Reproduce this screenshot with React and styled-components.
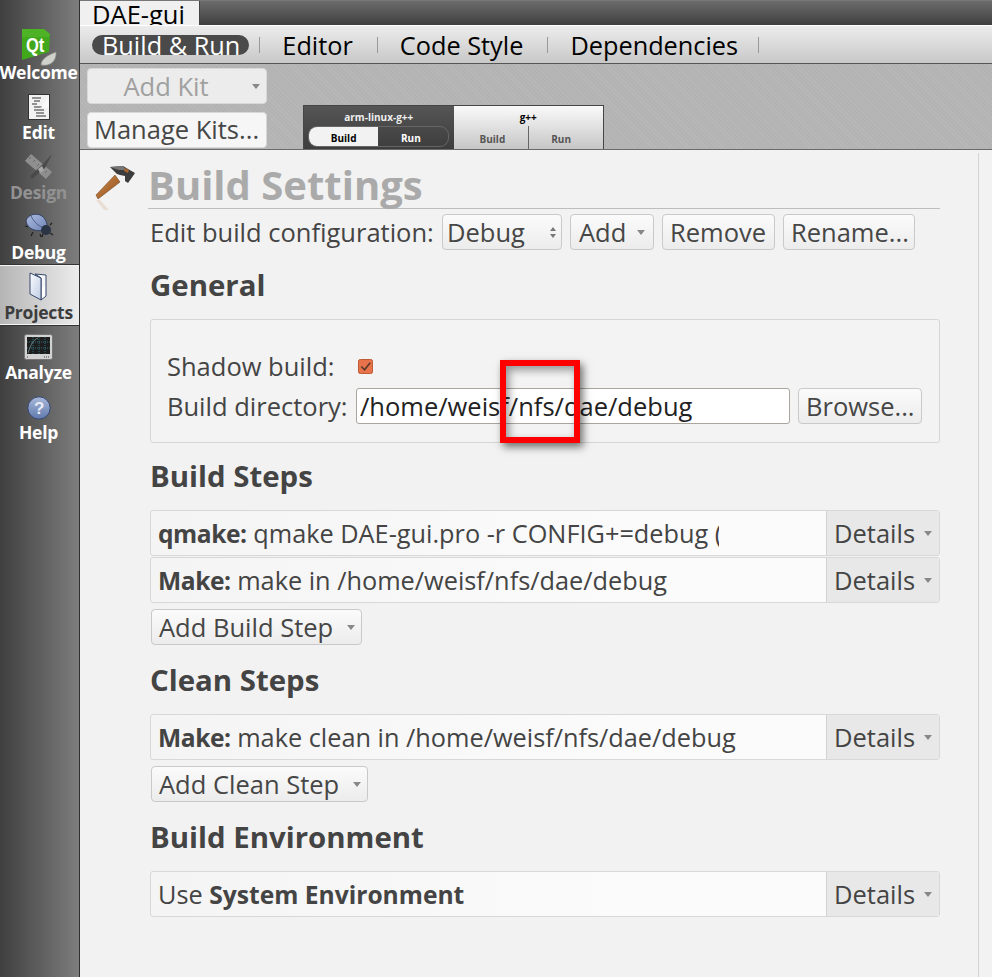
import React from 'react'
import styled, { createGlobalStyle } from 'styled-components'

const Global = createGlobalStyle`
  html, body { margin: 0; padding: 0; background: #f2f2f2; }
  body { font-family: "Open Sans", "Noto Sans", "Liberation Sans", sans-serif; }
  * { box-sizing: border-box; }
`
const Shell = styled.div`
  position: relative;
  display: flex;
  width: 992px;
  height: 977px;
  overflow: hidden;
`
const Sidebar = styled.div`
  width: 80px;
  flex: none;
  padding-top: 25px;
  border-right: 1px solid #2e2e2e;
  background: linear-gradient(to right, #3f3f3f, #7d7d7d);
`
const NavItem = styled.div`
  height: 60px;
  display: flex;
  flex-direction: column;
  align-items: center;
  justify-content: flex-end;
  padding: 0 2px ${p => (p.active ? 1 : 2)}px 0;
  font-size: 17.5px;
  line-height: 22px;
  font-weight: 700;
  letter-spacing: -0.25px;
  white-space: nowrap;
  color: ${p => (p.active ? '#3d3d3d' : p.dim ? '#929292' : '#fff')};
  ${p =>
    p.active &&
    `background: linear-gradient(to right, #b5b5b5, #ececec);
     border-top: 1px solid #f4f4f4;
     border-bottom: 1px solid #f4f4f4;
     box-shadow: 0 -1px 0 #333, 0 1px 0 #333;`}
`
const NavIcon = styled.svg`
  display: block;
  flex: none;
  margin-bottom: 1px;
  overflow: visible;
`
const Main = styled.div`
  flex: 1;
  min-width: 0;
  display: flex;
  flex-direction: column;
`
const TitleBar = styled.div`
  height: 25px;
  display: flex;
  align-items: flex-end;
  border-top: 1px solid #777;
  background: linear-gradient(#6b6b6b, #585858 45%, #3f3f3f);
`
const DocTab = styled.div`
  width: 120px;
  height: 24px;
  padding-left: 12px;
  font-size: 25.5px;
  line-height: 27px;
  color: #000;
  background: #f0f0f0;
  border-right: 1px solid #444;
`
const TabBar = styled.div`
  height: 39px;
  display: flex;
  align-items: center;
  padding-left: 12px;
  border-top: 1px solid #fff;
  border-bottom: 1px solid #555;
  background: linear-gradient(#ececec, #c8c8c8);
`
const ModeTab = styled.div`
  height: 20px;
  margin-right: ${p => p.after}px;
  padding: ${p => (p.active ? '0 9px 0 10px' : '0')};
  display: flex;
  align-items: center;
  border-radius: 10px;
  font-size: 25.3px;
  white-space: nowrap;
  color: ${p => (p.active ? '#fff' : '#000')};
  background: ${p => (p.active ? '#4a4a4a' : 'transparent')};
`
const Sep = styled.div`
  width: 1px;
  height: 16px;
  margin-right: 22px;
  background: #999;
`
const KitBar = styled.div`
  height: 86px;
  display: flex;
  align-items: flex-end;
  border-bottom: 1px solid #6a6a6a;
  background: repeating-linear-gradient(45deg, #b8b8b8 0 1px, #b3b3b3 1px 3px);
`
const KitButtons = styled.div`
  width: 223px;
  flex: none;
  padding: 4px 0 1px 7px;
  display: flex;
  flex-direction: column;
  gap: 8px;
`
const KitButton = styled.div`
  width: 180px;
  height: 36px;
  display: flex;
  align-items: center;
  justify-content: ${p => (p.disabled ? 'center' : 'flex-start')};
  padding: ${p => (p.disabled ? '0 22px 0 0' : '0 0 2px 6px')};
  position: relative;
  font-size: 25.5px;
  white-space: nowrap;
  color: ${p => (p.disabled ? '#a0a0a0' : '#464646')};
  border-radius: 4px;
  border: 1px solid #d8d8d8;
  background: ${p => (p.disabled ? '#ececec' : '#f6f6f6')};
`
const Caret = styled.span`
  position: ${p => (p.abs ? 'absolute' : 'static')};
  right: 6px;
  top: 15px;
  flex: none;
  width: 0;
  height: 0;
  border-left: 4px solid transparent;
  border-right: 4px solid transparent;
  border-top: 5px solid #888;
`
const Spinner = styled.svg`
  flex: none;
`
const KitSelector = styled.div`
  display: flex;
  width: 301px;
  height: 44px;
  border: 1px solid #454545;
  border-bottom: none;
`
const KitColumn = styled.div`
  width: 150px;
  display: flex;
  flex-direction: column;
  background: ${p => (p.dark ? 'linear-gradient(#555, #3d3d3d)' : 'linear-gradient(#fafafa, #c6c6c6)')};
`
const KitName = styled.div`
  height: 20px;
  padding-top: 4px;
  text-align: center;
  font-size: 10px;
  font-weight: 700;
  color: ${p => (p.dark ? '#eee' : '#000')};
`
const Segments = styled.div`
  flex: 1;
  display: flex;
  font-size: 10px;
  font-weight: 700;
  ${p => p.dark && `
    margin: 0 5px 2px 4px;
    border: 1px solid #666;
    border-radius: 9px;
    overflow: hidden;
  `}
`
const Segment = styled.div`
  width: 50%;
  flex: none;
  display: flex;
  align-items: center;
  justify-content: center;
  padding: 2px ${p => p.right || 0}px 0 ${p => p.left || 0}px;
  color: ${p => (p.selected ? '#000' : p.dark ? '#fff' : '#555')};
  background: ${p => (p.selected ? '#f2f2f2' : 'transparent')};
  border-left: ${p => (p.divide ? '1px solid #666' : 'none')};
`
const Content = styled.div`
  flex: 1;
  position: relative;
  padding: 0 52px 0 70px;
  color: #444;
  background: #f2f2f2;
  &::after {
    content: '';
    position: absolute;
    left: 898px;
    top: 3px;
    bottom: 0;
    width: 1px;
    background: #d4d4d4;
  }
`
const Hammer = styled.svg`
  position: absolute;
  left: 15px;
  top: 12px;
`
const PageTitle = styled.div`
  height: 59px;
  margin-left: -2px;
  padding-top: 12px;
  border-bottom: 1px solid #bdbdbd;
  font-size: 40px;
  line-height: 46px;
  font-weight: 700;
  white-space: nowrap;
  color: #aaa;
`
const Row = styled.div`
  display: flex;
  align-items: center;
  gap: 8px;
  margin-top: ${p => p.top || 0}px;
  font-size: 25.5px;
`
const ConfigRow = styled(Row)`
  height: 36px;
  margin-top: 5px;
`
const Push = styled.button`
  height: 36px;
  width: ${p => p.w}px;
  flex: none;
  display: flex;
  align-items: center;
  justify-content: space-between;
  padding: 0 ${p => p.pad || 7}px;
  font: inherit;
  font-size: 25.5px;
  color: #464646;
  border: 1px solid #c9c9c9;
  border-radius: 4px;
  background: linear-gradient(#fbfbfb, #ececec);
  white-space: nowrap;
`
const Section = styled.h2`
  margin: 0;
  height: ${p => p.h}px;
  padding-top: ${p => p.top}px;
  font-size: 29.4px;
  line-height: 36px;
  font-weight: 700;
  white-space: nowrap;
  color: #444;
`
const Panel = styled.div`
  height: 124px;
  padding: 29px 16px 0;
  border: 1px solid #d6d6d6;
  border-radius: 3px;
  background: #f3f3f3;
`
const FieldLabel = styled.span`
  flex: none;
  width: ${p => p.w}px;
  white-space: nowrap;
`
const Check = styled.svg`
  flex: none;
`
const PathField = styled.div`
  width: 434px;
  height: 36px;
  flex: none;
  padding-left: 3px;
  line-height: 35px;
  font-size: 25.5px;
  color: #222;
  background: #fff;
  border: 1px solid #aaa69f;
  border-radius: 3px;
  white-space: nowrap;
`
const StepRow = styled.div`
  display: flex;
  height: 46px;
  margin-bottom: 1px;
  border: 1px solid #d8d8d8;
  border-radius: 3px;
  font-size: 25.3px;
  color: #444;
  background: linear-gradient(to right, #f4f4f4, #fbfbfb 60%);
`
const StepText = styled.div`
  flex: 1;
  min-width: 0;
  padding-left: 7px;
  line-height: 44px;
  white-space: nowrap;
  b { font-weight: 700; font-size: 24.6px; }
`
const Lead = styled.b`
  letter-spacing: -0.45px;
`
const Clip = styled.div`
  width: 561px;
  overflow: hidden;
`
const Details = styled.div`
  width: 113px;
  flex: none;
  display: flex;
  align-items: center;
  justify-content: space-between;
  padding: 0 7px 0 7px;
  font-size: 25.5px;
  color: #444;
  background: #e8e8e8;
  border-left: 1px solid #d2d2d2;
`
const AddStep = styled(Push)`
  margin: 6px 0 0 1px;
  padding: 0 6px 0 7px;
`
const Marker = styled.div`
  position: absolute;
  left: 500px;
  top: 360px;
  width: 80px;
  height: 83px;
  border: 6px solid #ff0000;
  box-shadow: 3px 4px 8px rgba(0, 0, 0, 0.55), inset 3px 4px 8px rgba(0, 0, 0, 0.4);
`

const Icon = ({ name }) => {
  if (name === 'qt')
    return (
      <NavIcon width="36" height="38" viewBox="0 0 36 38">
        <path d="M1 7 L23 7 L29 12 L28 30 L1 38 Z" fill="#41a81b" />
        <path d="M1 7 L23 7 L29 12 L28 15 L1 15 Z" fill="#5cbc34" opacity=".5" />
        <text x="5" y="30" fontSize="21" fontWeight="700" fill="#fff" fontFamily="Liberation Sans" textLength="18" lengthAdjust="spacingAndGlyphs">Qt</text>
        <path d="M20 43 C20 37 27 33 35 30 C36 38 30 45 20 43 Z" fill="#cfd2ca" stroke="#8a8a8a" strokeWidth=".7" />
      </NavIcon>
    )
  if (name === 'edit')
    return (
      <NavIcon width="22" height="26" viewBox="0 0 22 26">
        <rect x=".5" y=".5" width="21" height="25" fill="#f2f2f2" stroke="#333" />
        <path d="M4 4h9M6 7h6M4 10h5M6 13h8M6 16h10M8 19h8M8 22h10" stroke="#333" strokeWidth="1" />
        <path d="M12 14 L21 2 V14 Z" fill="#fff" opacity=".5" />
      </NavIcon>
    )
  if (name === 'design')
    return (
      <NavIcon width="28" height="28" viewBox="0 0 28 28">
        <path d="M0 9 L6 2 L27 20 L21 27 Z" fill="#8f8f8f" />
        <path d="M6 5l-2 2M10 8l-2 2M14 12l-2 2M18 15l-2 2M22 19l-2 2" stroke="#6c6c6c" />
        <path d="M7 27 L5 24 L18 12 L27 2 L20 16 Z" fill="#4a4a4a" />
        <path d="M13 17 L17 14 L19 18 L15 21 Z" fill="#a8a8a8" />
      </NavIcon>
    )
  if (name === 'bug')
    return (
      <NavIcon width="30" height="26" viewBox="0 0 30 26">
        <defs>
          <linearGradient id="shellFill" x1="0" y1="0" x2="1" y2="1">
            <stop offset="0" stopColor="#aebce0" />
            <stop offset="1" stopColor="#6d84b5" />
          </linearGradient>
        </defs>
        <path d="M2 7 C3 1 12 -2 18 2 C23 6 24 12 22 15 C15 19 3 16 2 7 Z" fill="url(#shellFill)" stroke="#33415e" />
        <path d="M7 2 C10 8 15 13 21 14" stroke="#4b5d85" fill="none" />
        <circle cx="22" cy="16" r="5" fill="#2b3445" />
        <path d="M1 12l3 1M9 18l-2 4M16 20l1 3M26 11l2-2M26 19l3 2M19 20l-1 3" stroke="#222" strokeWidth="1.3" />
      </NavIcon>
    )
  if (name === 'folder')
    return (
      <NavIcon width="20" height="30" viewBox="0 0 20 30">
        <defs>
          <linearGradient id="coverFill" x1="0" y1="0" x2="1" y2="1">
            <stop offset="0" stopColor="#fdfdff" />
            <stop offset="1" stopColor="#bccbe4" />
          </linearGradient>
        </defs>
        <path d="M6 4 L17 5 L17 26 L12 30 V8 Z" fill="#f4f6fa" stroke="#37476b" />
        <path d="M1 3 L12 8 V30 L1 24 Z" fill="url(#coverFill)" stroke="#37476b" />
        <path d="M13 18 L16 16 V26 L13 28 Z" fill="#fff" />
      </NavIcon>
    )
  if (name === 'analyze')
    return (
      <NavIcon width="30" height="26" viewBox="0 0 30 26">
        <rect x=".5" y=".5" width="28" height="25" rx="2" fill="#d2d2d2" stroke="#777" />
        <rect x="3" y="3" width="23" height="17" fill="#1d1d1d" />
        <path d="M9 3v17M15 3v17M21 3v17M3 8h23M3 14h23" stroke="#3a95a5" strokeWidth=".7" strokeDasharray="1 1" />
        <path d="M4 19 C7 10 9 6 14 4" stroke="#5f7f80" fill="none" />
        <path d="M20 23h6M3 23h1" stroke="#444" strokeWidth="1.2" strokeDasharray="1 1" />
      </NavIcon>
    )
  return (
    <NavIcon width="24" height="24" viewBox="0 0 24 24">
      <defs>
        <linearGradient id="helpFill" x1="0" y1="0" x2="0" y2="1">
          <stop offset="0" stopColor="#a9b9da" />
          <stop offset="1" stopColor="#6079ad" />
        </linearGradient>
      </defs>
      <circle cx="12" cy="12" r="11.2" fill="url(#helpFill)" stroke="#34466f" />
      <text x="12" y="18" textAnchor="middle" fontSize="17" fill="#e9edf5" fontFamily="Liberation Sans">?</text>
    </NavIcon>
  )
}

const navItems = [
  { name: 'qt', label: 'Welcome' },
  { name: 'edit', label: 'Edit' },
  { name: 'design', label: 'Design', dim: true },
  { name: 'bug', label: 'Debug' },
  { name: 'folder', label: 'Projects', active: true },
  { name: 'analyze', label: 'Analyze' },
  { name: 'help', label: 'Help' }
]

const Step = ({ children, clip }) => (
  <StepRow>
    <StepText>{clip ? <Clip>{children}</Clip> : children}</StepText>
    <Details>
      Details <Caret />
    </Details>
  </StepRow>
)

export default function App() {
  return (
    <Shell>
      <Global />
      <Sidebar>
        {navItems.map(item => (
          <NavItem key={item.label} active={item.active} dim={item.dim}>
            <Icon name={item.name} />
            {item.label}
          </NavItem>
        ))}
      </Sidebar>
      <Main>
        <TitleBar>
          <DocTab>DAE-gui</DocTab>
        </TitleBar>
        <TabBar>
          <ModeTab active after={10}>Build &amp; Run</ModeTab>
          <Sep />
          <ModeTab after={24}>Editor</ModeTab>
          <Sep />
          <ModeTab after={24}>Code Style</ModeTab>
          <Sep />
          <ModeTab after={20}>Dependencies</ModeTab>
          <Sep />
        </TabBar>
        <KitBar>
          <KitButtons>
            <KitButton disabled>
              Add Kit
              <Caret abs />
            </KitButton>
            <KitButton>Manage Kits...</KitButton>
          </KitButtons>
          <KitSelector>
            <KitColumn dark>
              <KitName dark>arm-linux-g++</KitName>
              <Segments dark>
                <Segment selected>Build</Segment>
                <Segment dark right={4}>Run</Segment>
              </Segments>
            </KitColumn>
            <KitColumn>
              <KitName>g++</KitName>
              <Segments>
                <Segment left={3}>Build</Segment>
                <Segment divide right={10}>Run</Segment>
              </Segments>
            </KitColumn>
          </KitSelector>
        </KitBar>
        <Content>
          <Hammer width="42" height="50" viewBox="0 0 42 50">
            <defs>
              <linearGradient id="woodFill" x1="0" y1="0" x2="1" y2="1">
                <stop offset="0" stopColor="#d08a4a" />
                <stop offset="1" stopColor="#8f4f1f" />
              </linearGradient>
            </defs>
            <path d="M1 33 L20 13 L25 20 L3 37 Z" fill="url(#woodFill)" stroke="#6b3a10" strokeWidth=".5" />
            <path d="M15 5 L28 4 L33 7 L40 11 L38 14 L33 21 L30 19 L30 14 L25 13 L22 12 Z" fill="#3c3c3c" />
            <path d="M15 5 L28 4 L31 8 L24 8 Z" fill="#777" />
            <path d="M30 6 L34 8 L33 11 L29 9 Z" fill="#a8642a" />
            <path d="M1 38 L5 38 L14 48 L9 48 Z" fill="#e6d6c8" opacity=".7" />
          </Hammer>
          <PageTitle>Build Settings</PageTitle>
          <ConfigRow>
            <FieldLabel w={284}>Edit build configuration:</FieldLabel>
            <Push w={120} pad={4}>
              Debug
              <Spinner width="8" height="13" viewBox="0 0 8 13">
                <path d="M4 1 L7 5 H1 Z M4 12 L1 8 H7 Z" fill="#777" />
              </Spinner>
            </Push>
            <Push w={84} pad={8}>
              Add <Caret />
            </Push>
            <Push w={113}>Remove</Push>
            <Push w={132}>Rename...</Push>
          </ConfigRow>
          <Section h={69} top={17}>General</Section>
          <Panel>
            <Row>
              <FieldLabel w={183}>Shadow build:</FieldLabel>
              <Check width="15" height="15" viewBox="0 0 16 16">
                <rect x=".5" y=".5" width="15" height="15" rx="2" fill="#e8734a" stroke="#b9532e" />
                <path d="M3.5 8 L7 11.5 L13 4" stroke="#5a3a2c" strokeWidth="1.8" fill="none" />
              </Check>
            </Row>
            <Row top={5}>
              <FieldLabel w={181}>Build directory:</FieldLabel>
              <PathField>/home/weisf/nfs/dae/debug</PathField>
              <Push w={124}>Browse...</Push>
            </Row>
          </Panel>
          <Section h={67} top={15}>Build Steps</Section>
          <Step clip>
            <Lead>qmake:</Lead> qmake DAE-gui.pro -r CONFIG+=debug (
          </Step>
          <Step>
            <Lead>Make:</Lead> make in /home/weisf/nfs/dae/debug
          </Step>
          <AddStep w={211}>
            Add Build Step <Caret />
          </AddStep>
          <Section h={69} top={17}>Clean Steps</Section>
          <Step>
            <Lead>Make:</Lead> make clean in /home/weisf/nfs/dae/debug
          </Step>
          <AddStep w={217}>
            Add Clean Step <Caret />
          </AddStep>
          <Section h={69} top={17}>Build Environment</Section>
          <Step>
            Use <b>System Environment</b>
          </Step>
        </Content>
      </Main>
      <Marker />
    </Shell>
  )
}
